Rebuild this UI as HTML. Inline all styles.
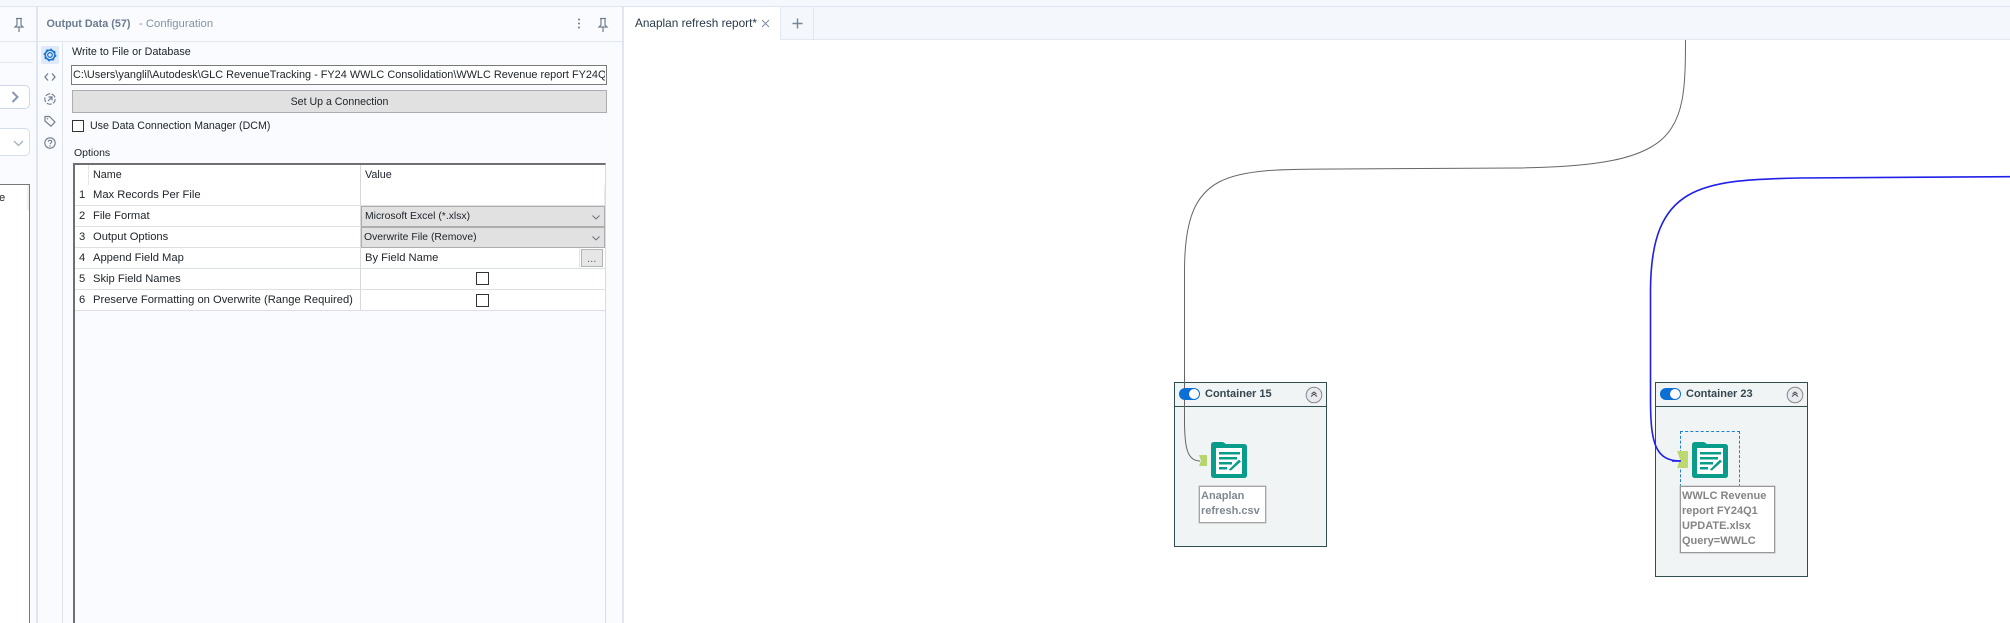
<!DOCTYPE html>
<html><head><meta charset="utf-8"><style>
html,body{margin:0;padding:0;width:2010px;height:623px;overflow:hidden;background:#fff;font-family:"Liberation Sans",sans-serif;color:#1f2a33}
.a{position:absolute;box-sizing:border-box}
.t{position:absolute;white-space:nowrap;font-size:11.2px;line-height:14px;color:#20262c}
.hl{position:absolute;height:1px;background:#dcdfe3}
.rn{left:79px}.nm{left:93px}
.dd{position:absolute;left:361px;width:244px;height:21px;background:#e1e1e1;border:1px solid #adadad;box-sizing:border-box}
.cb{position:absolute;width:13px;height:13px;border:1px solid #333;background:#fff;box-sizing:border-box}
.lbl{position:absolute;background:#fff;border:1px solid #a5a5a5;box-shadow:0 0 0 .5px #bbb;box-sizing:border-box}
.lt{position:absolute;font-size:11px;font-weight:bold;line-height:15px;white-space:nowrap;color:#808892}
.ct{position:absolute;font-size:11px;font-weight:bold;line-height:14px;color:#36474f;white-space:nowrap}
svg{position:absolute;overflow:visible}
</style></head><body>
<!-- panels background -->
<div class="a" style="left:0;top:0;width:2010px;height:7px;background:#f5f8fd"></div>
<div class="a" style="left:0;top:6px;width:624px;height:1px;background:#dfe6f3"></div>
<div class="a" style="left:0;top:7px;width:36px;height:616px;background:#f9fbfe"></div>
<div class="a" style="left:36px;top:7px;width:2px;height:616px;background:#dfe6f3"></div>
<div class="a" style="left:38px;top:7px;width:584px;height:616px;background:#f9fbfe"></div>
<div class="a" style="left:622px;top:6px;width:2px;height:617px;background:#dfe6f3"></div>
<div class="a" style="left:0;top:41px;width:36px;height:1px;background:#e2e7f0"></div>
<div class="a" style="left:38px;top:41px;width:584px;height:1px;background:#e2e7f0"></div>

<!-- left panel -->
<div class="a" style="left:0;top:62px;width:33px;height:1px;background:#e3e7ef"></div>
<svg style="left:12px;top:17px" width="14" height="16" viewBox="0 0 14 16"><path d="M4 1.500h6M5 1.500v6.500L3 10h8L9 8V1.500M7 10v5" fill="none" stroke="#6f7f92" stroke-width="1.200"/></svg>
<div class="a" style="left:-6px;top:85px;width:36px;height:24px;border:1px solid #ccd7e8;border-radius:5px;background:#fff"></div>
<svg style="left:10px;top:91px" width="10" height="12" viewBox="0 0 10 12"><path d="M2.500 1l5 5-5 5" fill="none" stroke="#8898ae" stroke-width="2"/></svg>
<div class="a" style="left:-6px;top:128px;width:36px;height:28px;border:1px solid #d5deec;border-radius:5px;background:#fff"></div>
<svg style="left:13px;top:140px" width="11" height="7" viewBox="0 0 11 7"><path d="M1 1l4.500 4.500L10 1" fill="none" stroke="#a5b0c2" stroke-width="1.300"/></svg>
<div class="a" style="left:0;top:184px;width:30px;height:439px;background:#fff;border-top:1px solid #777;border-right:1px solid #777"></div>
<div class="t" style="left:-1px;top:191px">e</div>
<div class="a" style="left:27px;top:185px;width:2px;height:25px;background:#f0f0f0"></div>

<!-- config header -->
<div class="t" style="left:46.500px;top:17px;font-size:10.800px;font-weight:bold;color:#6b7b90">Output Data (57)</div>
<div class="t" style="left:139px;top:17px;font-size:11.300px;color:#8492a5">- Configuration</div>
<svg style="left:577px;top:17px" width="4" height="14" viewBox="0 0 4 14"><circle cx="2" cy="2.500" r="1" fill="#6a7a8e"/><circle cx="2" cy="6.500" r="1" fill="#6a7a8e"/><circle cx="2" cy="10.500" r="1" fill="#6a7a8e"/></svg>
<svg style="left:596px;top:17px" width="14" height="16" viewBox="0 0 14 16"><path d="M4 1.500h6M5 1.500v6.500L3 10h8L9 8V1.500M7 10v5" fill="none" stroke="#6f7f92" stroke-width="1.200"/></svg>

<!-- icon strip -->
<div class="a" style="left:62px;top:42px;width:1px;height:581px;background:#e1e5f0"></div>
<div class="a" style="left:41px;top:46px;width:18px;height:18px;background:#deeafa;border-radius:2px"></div>
<svg style="left:43px;top:48px" width="14" height="14" viewBox="0 0 14 14"><circle cx="7" cy="7" r="2.300" fill="none" stroke="#1f77d0" stroke-width="1.300"/><circle cx="7" cy="7" r="4.800" fill="none" stroke="#1f77d0" stroke-width="1.600"/><circle cx="7" cy="7" r="5.700" fill="none" stroke="#1f77d0" stroke-width="1.400" stroke-dasharray="2 2.470"/></svg>
<svg style="left:44px;top:72px" width="12" height="10" viewBox="0 0 12 10"><path d="M4 1.500L1 5l3 3.500M8 1.500L11 5 8 8.500" fill="none" stroke="#6f7d8f" stroke-width="1.300"/></svg>
<svg style="left:44px;top:93px" width="12" height="12" viewBox="0 0 12 12"><circle cx="6" cy="6" r="5.200" fill="none" stroke="#6f7d8f" stroke-width="1.100" stroke-dasharray="5 1.500"/><path d="M4 8l4-4M4.500 4H8v3.500" fill="none" stroke="#6f7d8f" stroke-width="1.200"/></svg>
<svg style="left:44px;top:115px" width="12" height="12" viewBox="0 0 12 12"><path d="M1 1.500h4.500L11 7l-4 4.200L1 6z" fill="none" stroke="#6f7d8f" stroke-width="1.200" stroke-linejoin="round"/><circle cx="3.500" cy="3.800" r=".7" fill="#6f7d8f"/></svg>
<svg style="left:44px;top:137px" width="12" height="12" viewBox="0 0 12 12"><circle cx="6" cy="6" r="5.200" fill="none" stroke="#6f7d8f" stroke-width="1.100"/><path d="M4.300 4.700C4.300 2.800 7.800 2.800 7.800 4.700 7.800 6 6 5.900 6 7.300" fill="none" stroke="#6f7d8f" stroke-width="1.100"/><circle cx="6" cy="9" r=".7" fill="#6f7d8f"/></svg>

<!-- form -->
<div class="t" style="left:72px;top:45px;font-size:10.750px">Write to File or Database</div>
<div class="a" style="left:71px;top:65px;width:536px;height:20px;background:#fff;border:1px solid #7a7a7a"></div>
<div class="t" style="left:73px;top:68px;width:532px;overflow:hidden;font-size:10.900px">C:\Users\yanglil\Autodesk\GLC RevenueTracking - FY24 WWLC Consolidation\WWLC Revenue report FY24Q1 UPDATE.xlsx</div>
<div class="a" style="left:72px;top:90px;width:535px;height:23px;background:#e1e1e1;border:1px solid #adadad"></div>
<div class="t" style="left:72px;top:95px;width:535px;text-align:center;font-size:10.600px">Set Up a Connection</div>
<div class="cb" style="left:72px;top:120px;width:12px;height:12px"></div>
<div class="t" style="left:90px;top:119px;font-size:10.650px">Use Data Connection Manager (DCM)</div>
<div class="t" style="left:74px;top:146px;font-size:10.500px">Options</div>

<!-- grid -->
<div class="a" style="left:73px;top:163px;width:533px;height:460px;background:#f9fbfe;border-left:2px solid #6f6f6f;border-top:2px solid #6f6f6f;border-right:1px solid #d9dce0"></div>
<div class="a" style="left:75px;top:165px;width:530px;height:145px;background:#fff"></div>
<div class="a" style="left:88px;top:165px;width:1px;height:20px;background:#e6e6e6"></div>
<div class="a" style="left:360px;top:165px;width:1px;height:145px;background:#d8d8d8"></div>
<div class="a" style="left:604px;top:185px;width:1px;height:20px;background:#ececec"></div>
<div class="hl" style="left:75px;top:205px;width:530px"></div>
<div class="hl" style="left:75px;top:226px;width:530px"></div>
<div class="hl" style="left:75px;top:247px;width:530px"></div>
<div class="hl" style="left:75px;top:268px;width:530px"></div>
<div class="hl" style="left:75px;top:289px;width:530px"></div>
<div class="hl" style="left:75px;top:310px;width:530px"></div>
<div class="t nm" style="top:168px;font-size:10.750px">Name</div>
<div class="t" style="left:365px;top:168px;font-size:10.800px">Value</div>
<div class="t rn" style="top:188px">1</div><div class="t nm" style="top:188px">Max Records Per File</div>
<div class="t rn" style="top:209px">2</div><div class="t nm" style="top:209px">File Format</div>
<div class="t rn" style="top:230px">3</div><div class="t nm" style="top:230px">Output Options</div>
<div class="t rn" style="top:251px">4</div><div class="t nm" style="top:251px">Append Field Map</div>
<div class="t rn" style="top:272px">5</div><div class="t nm" style="top:272px">Skip Field Names</div>
<div class="t rn" style="top:293px">6</div><div class="t nm" style="top:293px">Preserve Formatting on Overwrite (Range Required)</div>
<div class="dd" style="top:206px"></div>
<div class="t" style="left:365px;top:210px;font-size:10.400px">Microsoft Excel (*.xlsx)</div>
<svg style="left:592px;top:215px" width="8" height="5" viewBox="0 0 8 5"><path d="M.500 .5l3.500 3.500 3.500-3.500" fill="none" stroke="#6a6a6a" stroke-width=".9"/></svg>
<div class="dd" style="top:227px"></div>
<div class="t" style="left:364px;top:231px;font-size:10.400px">Overwrite File (Remove)</div>
<svg style="left:592px;top:236px" width="8" height="5" viewBox="0 0 8 5"><path d="M.500 .5l3.500 3.500 3.500-3.500" fill="none" stroke="#6a6a6a" stroke-width=".9"/></svg>
<div class="t" style="left:365px;top:251px">By Field Name</div>
<div class="a" style="left:579px;top:248px;width:1px;height:20px;background:#e4e4e4"></div>
<div class="a" style="left:581px;top:249px;width:22px;height:18px;background:#e6e6e6;border:1px solid #b4b4b4"></div>
<div class="t" style="left:587px;top:252px;color:#666">...</div>
<div class="cb" style="left:476px;top:272px"></div>
<div class="cb" style="left:476px;top:294px"></div>

<!-- tabs -->
<div class="a" style="left:624px;top:7px;width:156px;height:33px;background:#fff"></div>
<div class="a" style="left:780px;top:6px;width:1230px;height:34px;background:#f4f7fc;border-top:1px solid #dfe6f3;border-bottom:1px solid #e2e7f0"></div>
<div class="a" style="left:624px;top:6px;width:157px;height:1px;background:#dfe6f3"></div>
<div class="a" style="left:780px;top:7px;width:1px;height:33px;background:#e2e7f0"></div>
<div class="a" style="left:813px;top:7px;width:1px;height:33px;background:#e2e7f0"></div>
<div class="t" style="left:635px;top:16px;font-size:11.800px;color:#2a3a4a">Anaplan refresh report*</div>
<svg style="left:761px;top:19px" width="9" height="9" viewBox="0 0 9 9"><path d="M1 1l7 7M8 1L1 8" fill="none" stroke="#8391a5" stroke-width="1.100"/></svg>
<svg style="left:792px;top:18px" width="11" height="11" viewBox="0 0 11 11"><path d="M5.500 .5v10M.5 5.500h10" fill="none" stroke="#75859a" stroke-width="1.400"/></svg>

<!-- containers -->
<div class="a" style="left:1174px;top:382px;width:153px;height:165px;background:#f0f4f5;border:1px solid #2f4f4f"></div>
<div class="a" style="left:1174px;top:406px;width:153px;height:1px;background:#2f4f4f"></div>
<div class="a" style="left:1655px;top:382px;width:153px;height:195px;background:#f0f4f5;border:1px solid #2f4f4f"></div>
<div class="a" style="left:1655px;top:406px;width:153px;height:1px;background:#2f4f4f"></div>

<!-- wires -->
<svg style="left:0;top:0" width="2010" height="623" viewBox="0 0 2010 623">
<path d="M1685.500 40C1685.500 135 1680 166 1517 168L1338 169C1225 169 1185 170 1184.500 270L1184.500 420C1184.500 447 1187 461 1200 461" fill="none" stroke="#666" stroke-width="1"/>
<path d="M2010 176.700L1800 178C1700 180 1651 185 1650.500 290L1650.500 400C1650.500 445 1656 461 1681 461" fill="none" stroke="#2020e8" stroke-width="1.600"/>
</svg>

<!-- Container 15 contents -->
<div class="a" style="left:1179px;top:388px;width:21px;height:12px;border-radius:6px;background:#0b6fd6"></div>
<div class="a" style="left:1189px;top:389px;width:10px;height:10px;border-radius:5px;background:#fff"></div>
<div class="ct" style="left:1205px;top:387px">Container 15</div>
<svg style="left:1305px;top:386px" width="18" height="18" viewBox="0 0 18 18"><circle cx="9" cy="9" r="7.800" fill="#e8eaf0" stroke="#888"/><path d="M6 10.500L9 8l3 2.500M6.500 8L9 6l2.500 2" fill="none" stroke="#444" stroke-width="1"/></svg>
<svg style="left:1198px;top:454px" width="10" height="13" viewBox="0 0 10 13"><path d="M1 1h8v11H1l2-5.500z" fill="#b6d66c"/></svg>
<svg style="left:1211px;top:442px" width="36" height="36" viewBox="0 0 36 36"><path d="M0 3Q0 0 3 0H12L15 2H33Q36 2 36 5V33Q36 36 33 36H3Q0 36 0 33Z" fill="#0a9c8b"/><rect x="5" y="6" width="26" height="26" fill="#fff"/><path d="M8 10h21v2.500H8zM8 15h18v2.500H8zM8 20h13v2.500H8zM8 25h8v2.500H8z" fill="#0a9c8b"/><path d="M17 28l11-11 2.500 2.500L20 29z" fill="#0a9c8b" stroke="#fff" stroke-width=".8"/></svg>
<div class="lbl" style="left:1199px;top:486px;width:67px;height:37px"><div class="lt" style="left:1px;top:2px">Anaplan<br>refresh.csv</div></div>

<!-- Container 23 contents -->
<div class="a" style="left:1660px;top:388px;width:21px;height:12px;border-radius:6px;background:#0b6fd6"></div>
<div class="a" style="left:1670px;top:389px;width:10px;height:10px;border-radius:5px;background:#fff"></div>
<div class="ct" style="left:1686px;top:387px">Container 23</div>
<svg style="left:1786px;top:386px" width="18" height="18" viewBox="0 0 18 18"><circle cx="9" cy="9" r="7.800" fill="#e8eaf0" stroke="#888"/><path d="M6 10.500L9 8l3 2.500M6.500 8L9 6l2.500 2" fill="none" stroke="#444" stroke-width="1"/></svg>
<div class="a" style="left:1680px;top:431px;width:60px;height:56px;border:1px dashed #1d80d2"></div>
<svg style="left:1677px;top:451px" width="12" height="18" viewBox="0 0 12 18"><path d="M0 0h11v17H0l3-8.500z" fill="#bcd96f"/></svg>
<svg style="left:0;top:0" width="2010" height="623" viewBox="0 0 2010 623"><path d="M1672 461H1681" stroke="#2020e8" stroke-width="1.600"/></svg>
<svg style="left:1692px;top:442px" width="36" height="36" viewBox="0 0 36 36"><path d="M0 3Q0 0 3 0H12L15 2H33Q36 2 36 5V33Q36 36 33 36H3Q0 36 0 33Z" fill="#0a9c8b"/><rect x="5" y="6" width="26" height="26" fill="#fff"/><path d="M8 10h21v2.500H8zM8 15h18v2.500H8zM8 20h13v2.500H8zM8 25h8v2.500H8z" fill="#0a9c8b"/><path d="M17 28l11-11 2.500 2.500L20 29z" fill="#0a9c8b" stroke="#fff" stroke-width=".8"/></svg>
<div class="lbl" style="left:1680px;top:486px;width:95px;height:67px;border-color:#999"><div class="lt" style="left:1px;top:2px;color:#858585">WWLC Revenue<br>report FY24Q1<br>UPDATE.xlsx<br>Query=WWLC</div></div>
</body></html>
